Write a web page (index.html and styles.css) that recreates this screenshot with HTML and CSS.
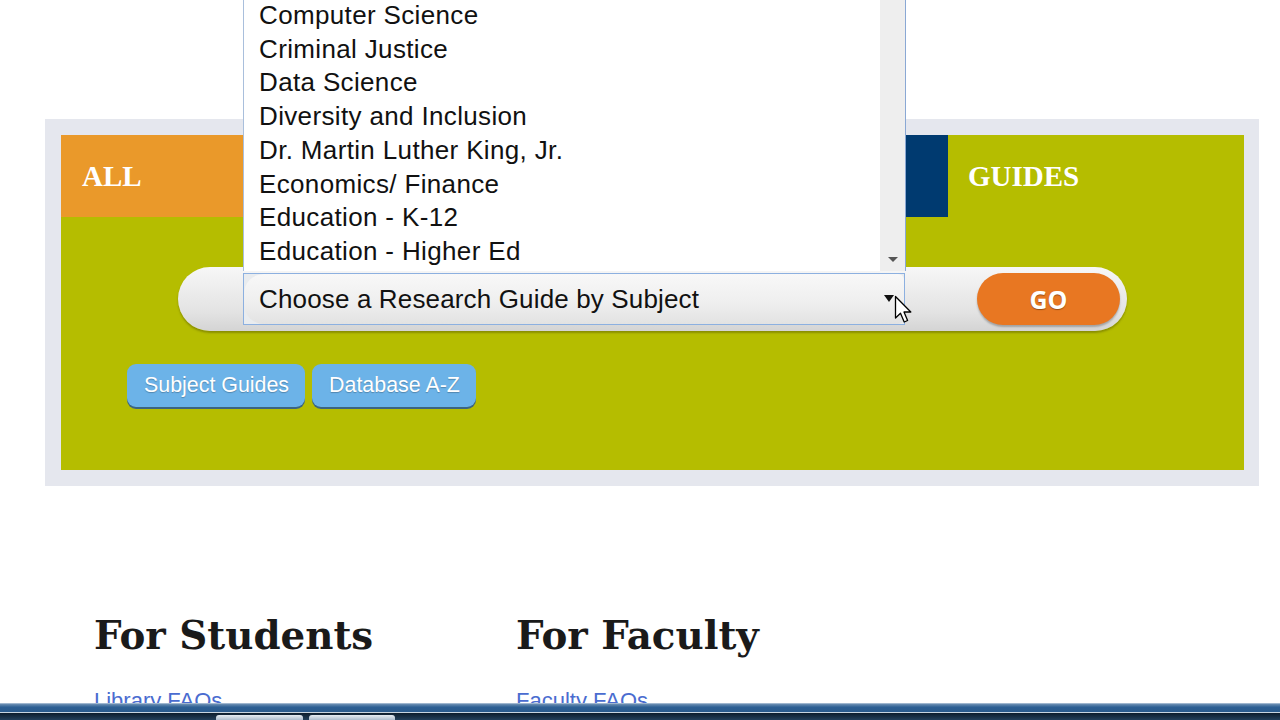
FILE: index.html
```html
<!DOCTYPE html>
<html>
<head>
<meta charset="utf-8">
<link rel="stylesheet" href="styles.css">
</head>
<body>
<div class="top-space"></div>
<div class="panel">
  <div class="green">
    <div class="tabs">
      <div class="tab tab-all">ALL</div>
      <div class="tab tab-b"></div>
      <div class="tab tab-c"></div>
      <div class="tab tab-d"></div>
      <div class="tab tab-guides">GUIDES</div>
    </div>
    <div class="search">
      <div class="pill">
        <div class="select">
          <div class="select-inner">
            <span class="select-text">Choose a Research Guide by Subject</span>
            <span class="select-arrow"></span>
          </div>
        </div>
        <div class="go">GO</div>
      </div>
    </div>
    <div class="quick">
      <a class="qbtn">Subject Guides</a>
      <a class="qbtn">Database A-Z</a>
    </div>
  </div>
</div>
<div class="columns">
  <div class="col">
    <h2 class="col-title">For Students</h2>
    <a class="col-link">Library FAQs</a>
  </div>
  <div class="col">
    <h2 class="col-title">For Faculty</h2>
    <a class="col-link">Faculty FAQs</a>
  </div>
</div>

<div class="dropdown">
  <ul class="options">
    <li>Computer Science</li>
    <li>Criminal Justice</li>
    <li>Data Science</li>
    <li>Diversity and Inclusion</li>
    <li>Dr. Martin Luther King, Jr.</li>
    <li>Economics/ Finance</li>
    <li>Education - K-12</li>
    <li>Education - Higher Ed</li>
  </ul>
  <div class="scrollbar"><span class="scroll-arrow"></span></div>
</div>

<svg class="cursor" width="20" height="30" viewBox="0 0 20 30">
  <path d="M1.5 1.5 L1.5 23 L6.5 18.2 L10.2 27 L13.6 25.5 L10 17 L16.8 17 Z" fill="#fff" stroke="#000" stroke-width="1.3" stroke-linejoin="round"/>
</svg>

<div class="taskbar">
  <div class="task-top"></div>
  <div class="task-bottom">
    <span class="task-btn t1"></span>
    <span class="task-btn t2"></span>
  </div>
</div>
</body>
</html>
```
FILE: styles.css
```css
html, body {
  margin: 0;
  padding: 0;
}
body {
  width: 1280px;
  height: 720px;
  overflow: hidden;
  position: relative;
  background: #fff;
  font-family: "Liberation Sans", Arial, sans-serif;
}
.top-space {
  height: 119px;
}
.panel {
  margin-left: 45px;
  width: 1183px;
  padding: 16px 15px 16px 16px;
  background: #e5e7ee;
}
.green {
  background: #b5bd00;
  height: 335px;
}
.tabs {
  display: flex;
  height: 82px;
}
.tab {
  display: flex;
  align-items: center;
  padding-left: 21px;
  font-family: "Liberation Serif", "Times New Roman", serif;
  font-weight: bold;
  font-size: 29px;
  color: #fff;
  box-sizing: border-box;
}
.tab-all { width: 222px; background: #ea992a; }
.tab-b { width: 222px; background: #7a9a2a; }
.tab-c { width: 222px; background: #5a86b0; }
.tab-d { width: 221px; background: #003a70; }
.tab-guides { flex: 1; background: #b5bd00; padding-left: 20px; }

.search {
  margin-top: 50px;
  display: flex;
  justify-content: center;
}
.pill {
  width: 949px;
  height: 64px;
  box-sizing: border-box;
  border-radius: 32px;
  background: linear-gradient(#f7f7f7, #e3e3e3 70%, #d4d4d4);
  box-shadow: 0 2px 2px rgba(60, 60, 0, 0.35);
  display: flex;
  align-items: center;
  padding-left: 65px;
  padding-right: 7px;
}
.select {
  width: 662px;
  height: 52px;
  box-sizing: border-box;
  border: 1px solid #8cb0e0;
  background: #e9ecef;
}
.select-inner {
  height: 100%;
  border-radius: 20px 6px 6px 20px;
  background: linear-gradient(#f8f8f8, #eeeeee 60%, #e2e2e2);
  display: flex;
  align-items: center;
  padding-left: 15px;
  padding-right: 10px;
  box-sizing: border-box;
}
.select-text {
  flex: 1;
  font-size: 26px;
  letter-spacing: 0.15px;
  color: #111;
}
.select-arrow {
  width: 0;
  height: 0;
  border-left: 5px solid transparent;
  border-right: 5px solid transparent;
  border-top: 7px solid #111;
  margin-bottom: 2px;
}
.go {
  margin-left: auto;
  width: 143px;
  height: 52px;
  border-radius: 26px;
  background: #e87722;
  color: #fff;
  font-family: "Open Sans", "Liberation Sans", sans-serif;
  font-weight: bold;
  font-size: 25px;
  display: flex;
  align-items: center;
  justify-content: center;
  text-shadow: 0 1px 1px rgba(0, 0, 0, 0.35);
  box-shadow: 0 2px 2px rgba(0, 0, 0, 0.25);
}

.quick {
  margin-top: 33px;
  padding-left: 66px;
  display: flex;
  gap: 7px;
}
.qbtn {
  height: 43px;
  padding: 0 16px 0 17px;
  border-radius: 9px;
  background: #6cb3e8;
  color: #fff;
  font-size: 21.4px;
  display: flex;
  align-items: center;
  box-shadow: 0 2px 0 #3c6580;
  text-shadow: 0 1px 1px rgba(0, 0, 0, 0.25);
}

.columns {
  display: flex;
  padding-left: 94px;
  margin-top: 127px;
}
.col {
  width: 422px;
}
.col-title {
  margin: 0;
  font-family: "DejaVu Serif", "Liberation Serif", serif;
  font-weight: bold;
  font-size: 38.8px;
  line-height: 46px;
  color: #1a1a1a;
}
.col-link {
  display: block;
  margin-top: 29px;
  font-size: 22px;
  color: #4a6cd0;
}

.dropdown {
  position: absolute;
  left: 243px;
  top: 0;
  width: 663px;
  height: 271px;
  box-sizing: border-box;
  background: #fff;
  border-left: 1px solid #a9bfdc;
  border-right: 1px solid #8aa8d4;
  display: flex;
}
.options {
  list-style: none;
  margin: -1px 0 0 0;
  padding: 0 0 0 15px;
  flex: 1;
}
.options li {
  font-size: 26px;
  letter-spacing: 0.35px;
  line-height: 33.7px;
  color: #111;
  white-space: nowrap;
}
.scrollbar {
  width: 25px;
  background: #eeeeee;
  position: relative;
}
.scroll-arrow {
  position: absolute;
  left: 8px;
  bottom: 9px;
  width: 0;
  height: 0;
  border-left: 5px solid transparent;
  border-right: 5px solid transparent;
  border-top: 5px solid #555;
}

.cursor {
  position: absolute;
  left: 894px;
  top: 295px;
}

.taskbar {
  position: absolute;
  left: 0;
  right: 0;
  bottom: 0;
  height: 17px;
}
.task-top {
  height: 8px;
  background: linear-gradient(#6c8fb3, #2d5f94 40%, #2a5a8c);
  border-top: 1px solid #9fb6cf;
}
.task-bottom {
  height: 8px;
  background: linear-gradient(#0c1c2c, #24405c);
  position: relative;
  border-top: 1px solid #c8d4e0;
  box-sizing: border-box;
}
.task-btn {
  position: absolute;
  top: 2px;
  height: 8px;
  border-radius: 3px 3px 0 0;
  background: linear-gradient(#e6ecf2, #8aa0b8);
}
.t1 { left: 216px; width: 87px; }
.t2 { left: 309px; width: 86px; }
```
